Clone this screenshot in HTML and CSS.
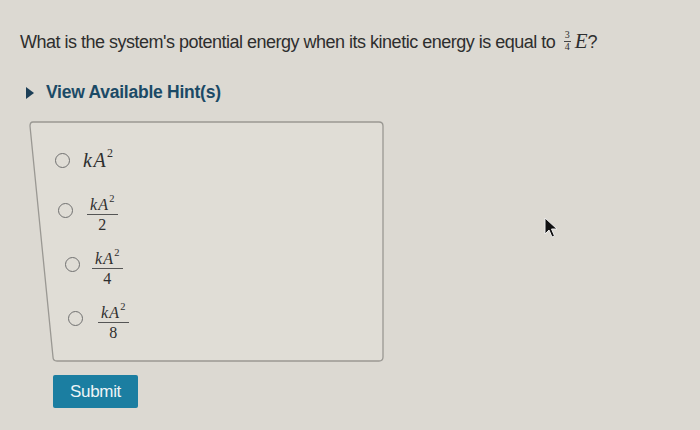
FILE: index.html
```html
<!DOCTYPE html>
<html>
<head>
<meta charset="utf-8">
<link rel="stylesheet" href="styles.css">
</head>
<body>
<div class="page">
  <p class="question">What is the system's potential energy when its kinetic energy is equal to <span class="frac small"><span class="num">3</span><span class="den">4</span></span><span class="mi">E</span>?</p>

  <div class="hint"><span class="tri"></span><span class="hint-text">View Available Hint(s)</span></div>

  <div class="box">
    <svg class="outline" width="356" height="243" viewBox="0 0 356 243">
      <path d="M4 1 H350 Q354 1 354 5 V236 Q354 240 350 240 H28 Q24 240 24 236 L1 5 Q1 1 4 1 Z" fill="#e0ddd6" stroke="#9a9893" stroke-width="1.3"/>
    </svg>
    <ul class="options">
      <li class="opt o1"><span class="radio"></span><span class="math"><span class="mi">kA</span><sup>2</sup></span></li>
      <li class="opt o2"><span class="radio"></span><span class="frac"><span class="num"><span class="mi">kA</span><sup>2</sup></span><span class="den">2</span></span></li>
      <li class="opt o3"><span class="radio"></span><span class="frac"><span class="num"><span class="mi">kA</span><sup>2</sup></span><span class="den">4</span></span></li>
      <li class="opt o4"><span class="radio"></span><span class="frac"><span class="num"><span class="mi">kA</span><sup>2</sup></span><span class="den">8</span></span></li>
    </ul>
  </div>

  <button class="submit">Submit</button>
</div>
<svg class="cursor" width="16" height="22" viewBox="0 0 16 22">
  <path d="M2 1 L2 17 L6 13 L9 20 L11.5 19 L8.5 12 L14 12 Z" fill="#111" stroke="#eee" stroke-width="1"/>
</svg>
</body>
</html>
```

FILE: styles.css
```css
html, body {
  margin: 0;
  padding: 0;
}
body {
  background: #dcd9d2;
  width: 700px;
  height: 430px;
  overflow: hidden;
  font-family: "Liberation Sans", Arial, sans-serif;
  color: #2e2e2e;
  position: relative;
}
.page {
  padding: 31px 0 0 20px;
}
.question {
  margin: 0;
  font-size: 18px;
  line-height: 20px;
  letter-spacing: -0.5px;
}
.mi {
  font-family: "Liberation Serif", "Times New Roman", serif;
  font-style: italic;
}
.question .mi {
  font-size: 21px;
  margin-left: 1px;
  letter-spacing: 0;
}
.frac {
  display: inline-flex;
  flex-direction: column;
  align-items: center;
  vertical-align: middle;
  font-family: "Liberation Serif", serif;
  letter-spacing: 0;
}
.frac.small {
  font-size: 10px;
  line-height: 10px;
  margin: 0 3px 0 4px;
  position: relative;
  top: -2px;
}
.frac .num {
  border-bottom: 1px solid #444;
  padding: 0 2px;
}
.frac.small .num {
  padding: 0 1px 1px;
}
.hint {
  display: flex;
  align-items: center;
  margin-top: 28px;
  margin-left: 6px;
  gap: 12px;
}
.tri {
  width: 0;
  height: 0;
  border-top: 6px solid transparent;
  border-bottom: 6px solid transparent;
  border-left: 8px solid #1c3f57;
}
.hint-text {
  font-weight: bold;
  font-size: 17.5px;
  color: #1b4a66;
  letter-spacing: -0.25px;
}
.box {
  position: relative;
  margin-top: 18px;
  margin-left: 9px;
  width: 356px;
  height: 241px;
}
.outline {
  position: absolute;
  left: 0;
  top: 0;
}
.options {
  position: relative;
  list-style: none;
  margin: 0;
  padding: 22px 0 0 0;
  display: flex;
  flex-direction: column;
  gap: 20px;
}
.opt {
  display: flex;
  align-items: center;
  gap: 13px;
  height: 34px;
  font-family: "Liberation Serif", serif;
  font-size: 20px;
  color: #2e2e2e;
}
.opt .mi {
  letter-spacing: 1.5px;
}
.o1 { padding-left: 26px; }
.o2 { padding-left: 29px; gap: 14px; }
.o3 { padding-left: 36px; gap: 12px; }
.o4 { padding-left: 39px; gap: 15px; }
.o2 .radio, .o3 .radio, .o4 .radio {
  position: relative;
  top: -4px;
}
.radio {
  box-sizing: border-box;
  width: 15px;
  height: 15px;
  border: 1.6px solid #707070;
  border-radius: 50%;
  flex: none;
}
.opt sup {
  font-family: "Liberation Serif", serif;
  font-style: normal;
  font-size: 12px;
  position: relative;
  top: -2px;
  vertical-align: super;
  line-height: 0;
}
.opt .frac {
  font-size: 16px;
  line-height: 15px;
}
.opt .frac .mi {
  letter-spacing: 1.2px;
}
.opt .frac sup {
  font-size: 10.5px;
  top: -1px;
}
.opt .frac .num {
  padding: 0 3px 2px;
  border-bottom-color: #555;
}
.opt .frac .den {
  padding-top: 2px;
}
.submit {
  display: block;
  margin-top: 13px;
  margin-left: 33px;
  width: 85px;
  height: 33px;
  border: none;
  border-radius: 2px;
  background: #1b7ea1;
  color: #eef4f6;
  font-family: "Liberation Sans", Arial, sans-serif;
  font-size: 17px;
  letter-spacing: -0.3px;
  padding: 0;
}
.cursor {
  position: absolute;
  left: 543px;
  top: 217px;
}
```
